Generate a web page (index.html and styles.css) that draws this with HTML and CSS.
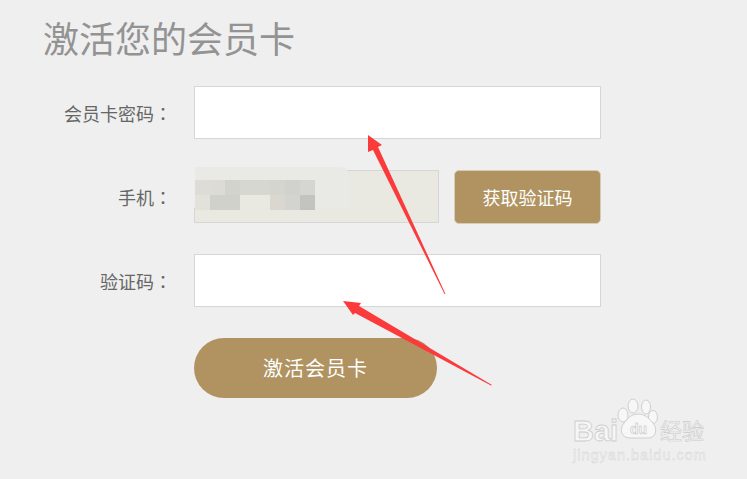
FILE: index.html
```html
<!DOCTYPE html>
<html lang="zh-CN">
<head>
<meta charset="utf-8">
<title>激活您的会员卡</title>
<link rel="stylesheet" href="styles.css">
</head>
<body>
<main class="page">
  <h1 class="title">激活您的会员卡</h1>
  <form class="form">
    <div class="row">
      <label class="label">会员卡密码<span class="colon" lang="zh-TW">：</span></label>
      <div class="field field-wide"></div>
    </div>
    <div class="row">
      <label class="label">手机<span class="colon" lang="zh-TW">：</span></label>
      <div class="field field-phone"></div>
      <button type="button" class="code-btn">获取验证码</button>
    </div>
    <div class="row">
      <label class="label">验证码<span class="colon" lang="zh-TW">：</span></label>
      <div class="field field-wide"></div>
    </div>
    <div class="row row-submit">
      <button type="button" class="submit-btn">激活会员卡</button>
    </div>
  </form>
</main>

<div class="smear"></div>
<div class="mosaic">
  <i class="c1"></i><i class="c2"></i><i class="c3"></i><i class="c4"></i><i class="c5"></i><i class="c6"></i><i class="c7"></i><i class="c8"></i>
  <i class="c9"></i><i class="c10"></i><i class="c11"></i><i class="c12"></i><i class="c12"></i><i class="c13"></i><i class="c14"></i><i class="c15"></i>
</div>

<svg class="arrows" viewBox="0 0 747 479" width="747" height="479" aria-hidden="true">
  <polygon class="arrow" points="368,135 382,145 378,147 445.5,294 444.5,294 373,150 368,152"/>
  <polygon class="arrow" points="343,301 361,303 359,306 492,385 491,385.5 355,313 353,315"/>
</svg>

<div class="watermark">
  <div class="wm-top">
    <span class="wm-bai">Bai</span>
    <svg class="wm-paw" viewBox="0 0 42 44" width="42" height="44" aria-hidden="true">
      <g class="paw">
        <ellipse cx="6" cy="17" rx="5" ry="7"/>
        <ellipse cx="16" cy="8" rx="5" ry="7"/>
        <ellipse cx="29" cy="9" rx="4.5" ry="7"/>
        <ellipse cx="36" cy="19" rx="4.5" ry="6.5"/>
        <path d="M21 16c6 0 10 3 15 9 5 6 3 15-5 15H13C4 40 2 31 7 25c5-6 8-9 14-9z"/>
      </g>
      <text class="paw-du" x="21.5" y="36">du</text>
    </svg>
    <span class="wm-jy">经验</span>
  </div>
  <div class="wm-url">jingyan.baidu.com</div>
</div>
</body>
</html>
```
FILE: styles.css
```css
* { box-sizing: border-box; }
html, body { margin: 0; height: 100%; }
body {
  width: 747px;
  height: 479px;
  overflow: hidden;
  position: relative;
  background: #efefef;
  font-family: "Noto Sans CJK SC", "Noto Sans", sans-serif;
}
.page { padding: 14px 0 0 43px; }
.title {
  margin: 0 0 26px;
  height: 46px;
  font-size: 36px;
  line-height: 46px;
  font-weight: 400;
  color: #939393;
}
.form { display: flex; flex-direction: column; gap: 31px; }
.row { display: flex; align-items: center; height: 53px; }
.row-submit { height: 60px; margin-left: 151px; }
.label {
  width: 129px;
  margin-right: 22px;
  text-align: right;
  font-size: 18px;
  line-height: 24px;
  color: #666;
  white-space: nowrap;
}
.colon { font-family: "Noto Sans CJK TC", sans-serif; }
.field { height: 53px; border: 1px solid #d6d6d6; background: #fff; }
.field-wide { width: 407px; }
.field-phone { width: 245px; background: #e9e8e1; }
.code-btn {
  width: 147px;
  height: 54px;
  margin-left: 15px;
  border: 1px solid #d6cdb8;
  border-radius: 5px;
  background: #b09360;
  color: #fff;
  font: 18px/24px "Noto Sans CJK SC", sans-serif;
  padding: 0;
}
.submit-btn {
  width: 243px;
  height: 60px;
  border: 0;
  border-radius: 30px;
  background: #b09360;
  color: #fff;
  font: 20px/28px "Noto Sans CJK SC", sans-serif;
  letter-spacing: 1px;
  padding: 0;
}
.smear {
  position: absolute;
  left: 180px;
  top: 167px;
  width: 170px;
  height: 41px;
  background: linear-gradient(90deg, #efefef 0, #efefef 14px, #e9e9e5 16px, #e9e9e5 100%);
  border-radius: 0 10px 0 0;
}
.mosaic {
  position: absolute;
  left: 195px;
  top: 180px;
  display: grid;
  grid-template-columns: repeat(8, 15px);
  grid-auto-rows: 15px;
}
.c1 { background: #dddcd6; } .c2 { background: #dcdbd5; } .c3 { background: #d3d3cd; }
.c4 { background: #d7d7d2; } .c5 { background: #d7d7d2; } .c6 { background: #d5d5cf; }
.c7 { background: #d2d2cc; } .c8 { background: #d5d5d1; }
.c9 { background: #e2e2db; } .c10 { background: #d1d1cc; } .c11 { background: #d1d1cc; }
.c12 { background: #e9e9e2; } .c13 { background: #dad7d1; } .c14 { background: #d3d4cf; }
.c15 { background: #c3c4bf; }
.arrows { position: absolute; left: 0; top: 0; pointer-events: none; }
.arrow { fill: #fb3b3b; }
.watermark {
  position: absolute;
  left: 573px;
  top: 398px;
  width: 134px;
}
.wm-top { display: flex; align-items: flex-end; height: 50px; }
.wm-bai {
  width: 44px;
  margin-bottom: 2px;
  font: 700 29px/29px "Liberation Sans", sans-serif;
  color: #f6f6f6;
  -webkit-text-stroke: 0.8px #cdcdcd;
}
.wm-paw { flex: none; align-self: flex-start; }
.paw { fill: #f7f7f7; stroke: #cfcfcf; stroke-width: 1; }
.paw-du {
  font: 700 14px "Liberation Sans", sans-serif;
  text-anchor: middle;
  fill: #f8f8f8;
  stroke: #bdbdbd;
  stroke-width: 0.5;
}
.wm-jy {
  margin: 0 0 6px 1px;
  font: 22px/26px "Noto Sans CJK SC", sans-serif;
  color: #f6f6f6;
  -webkit-text-stroke: 0.6px #c9c9c9;
  white-space: nowrap;
}
.wm-url {
  font: 14.5px/14px "Liberation Sans", sans-serif;
  letter-spacing: 1px;
  color: #f5f5f5;
  -webkit-text-stroke: 0.4px #d0d0d0;
  white-space: nowrap;
}
```
